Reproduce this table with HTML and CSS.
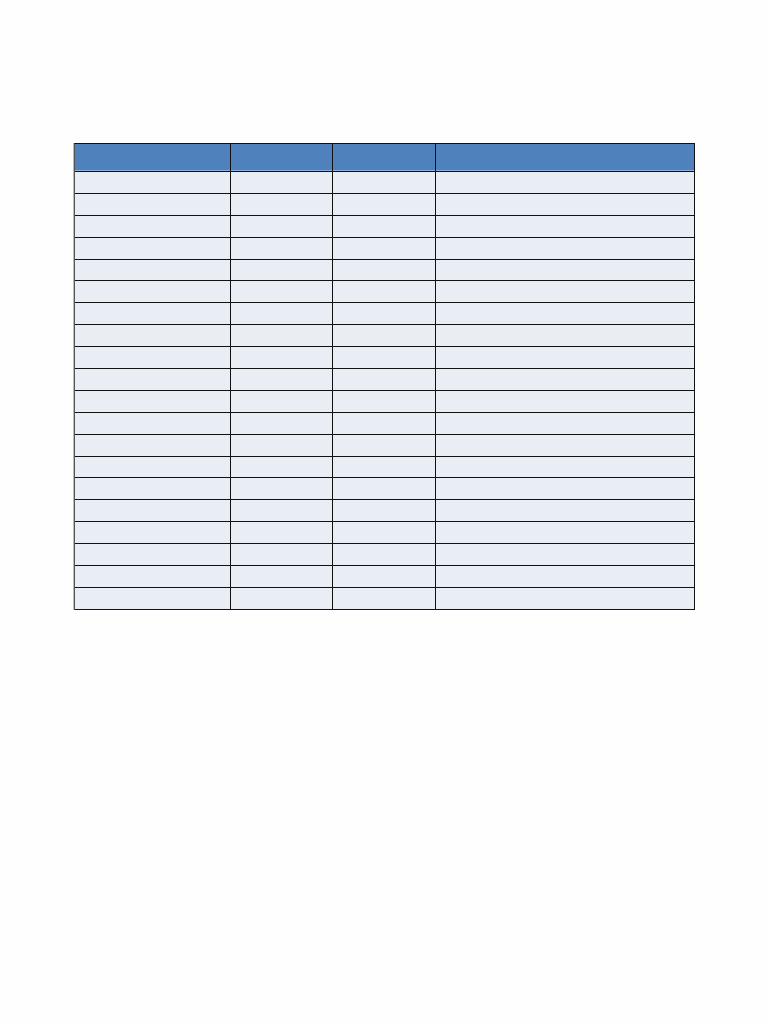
FILE: index.html
```html
<!DOCTYPE html>
<html>
<head>
<meta charset="utf-8">
<link rel="stylesheet" href="styles.css">
</head>
<body>
<div class="page">
  <div class="grid">
    <div class="cell head"></div><div class="cell head"></div><div class="cell head"></div><div class="cell head"></div>
    <div class="cell"></div><div class="cell"></div><div class="cell"></div><div class="cell"></div>
    <div class="cell"></div><div class="cell"></div><div class="cell"></div><div class="cell"></div>
    <div class="cell"></div><div class="cell"></div><div class="cell"></div><div class="cell"></div>
    <div class="cell"></div><div class="cell"></div><div class="cell"></div><div class="cell"></div>
    <div class="cell"></div><div class="cell"></div><div class="cell"></div><div class="cell"></div>
    <div class="cell"></div><div class="cell"></div><div class="cell"></div><div class="cell"></div>
    <div class="cell"></div><div class="cell"></div><div class="cell"></div><div class="cell"></div>
    <div class="cell"></div><div class="cell"></div><div class="cell"></div><div class="cell"></div>
    <div class="cell"></div><div class="cell"></div><div class="cell"></div><div class="cell"></div>
    <div class="cell"></div><div class="cell"></div><div class="cell"></div><div class="cell"></div>
    <div class="cell"></div><div class="cell"></div><div class="cell"></div><div class="cell"></div>
    <div class="cell"></div><div class="cell"></div><div class="cell"></div><div class="cell"></div>
    <div class="cell"></div><div class="cell"></div><div class="cell"></div><div class="cell"></div>
    <div class="cell"></div><div class="cell"></div><div class="cell"></div><div class="cell"></div>
    <div class="cell"></div><div class="cell"></div><div class="cell"></div><div class="cell"></div>
    <div class="cell"></div><div class="cell"></div><div class="cell"></div><div class="cell"></div>
    <div class="cell"></div><div class="cell"></div><div class="cell"></div><div class="cell"></div>
    <div class="cell"></div><div class="cell"></div><div class="cell"></div><div class="cell"></div>
    <div class="cell"></div><div class="cell"></div><div class="cell"></div><div class="cell"></div>
    <div class="cell"></div><div class="cell"></div><div class="cell"></div><div class="cell"></div>
  </div>
</div>
</body>
</html>
```
FILE: styles.css
```css
html, body {
  margin: 0;
  padding: 0;
  background: #fefefe;
  font-family: "Liberation Sans", Arial, sans-serif;
}
.page {
  width: 768px;
  height: 1024px;
  padding: 143px 0 0 74px;
  box-sizing: border-box;
}
.grid {
  display: grid;
  grid-template-columns: 156px 102px 103px 259px;
  grid-template-rows: 28px repeat(20, 21.9px);
  width: 620px;
  border-top: 1px solid #111;
  border-left: 1px solid #555;
  box-shadow: -1px 0 0 #bbb;
}
.cell {
  box-sizing: border-box;
  border-right: 1px solid #111;
  border-bottom: 1px solid #111;
  background: #e9edf4;
}
.cell.head {
  background: #4f81bd;
  box-shadow: inset 0 -1px 0 #8fb0da;
}
```
